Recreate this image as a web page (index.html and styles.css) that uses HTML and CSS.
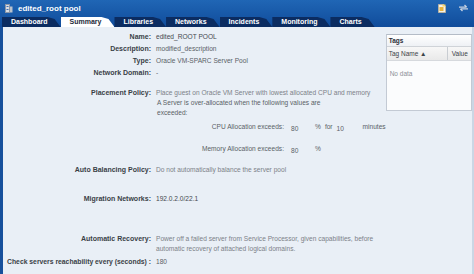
FILE: index.html
```html
<!DOCTYPE html>
<html lang="en">
<head>
  <meta charset="UTF-8" />
  <title>edited_root pool</title>
  <link rel="stylesheet" href="styles.css">
</head>
<body>
  <div class="app">
    <header class="top">
      <div class="title-row">
        <svg class="pool-icon" width="8" height="9" viewBox="0 0 8 9">
          <rect x="0.5" y="0.5" width="4" height="8" fill="#d9dde3" stroke="#8a96a6" stroke-width="1"/>
          <rect x="1.5" y="2" width="2" height="1" fill="#3c6fb6"/>
          <rect x="1.5" y="5" width="2" height="1" fill="#3c6fb6"/>
          <rect x="5" y="2.5" width="2.5" height="6" fill="#b9c2cd"/>
        </svg>
        <span class="title">edited_root pool</span>
        <div class="tools">
          <svg width="8" height="9" viewBox="0 0 8 9">
            <path d="M0.5 0.5h5l2 2v6h-7z" fill="#f4f1e6" stroke="#b8b3a2"/>
            <rect x="1.5" y="3" width="4" height="4" fill="#e8b33c"/>
            <rect x="4.5" y="0.5" width="3" height="2" fill="#f7d56b"/>
          </svg>
          <svg width="11" height="8" viewBox="0 0 11 8">
            <path d="M1 3.2h7.5M6.5 1l2.2 2.2M10 4.8H2.5M4.5 7L2.3 4.8" fill="none" stroke="#c8d3e2" stroke-width="1.3"/>
          </svg>
        </div>
      </div>
      <nav class="tabs">
        <span class="tab">Dashboard</span>
        <span class="tab active">Summary</span>
        <span class="tab">Libraries</span>
        <span class="tab">Networks</span>
        <span class="tab">Incidents</span>
        <span class="tab">Monitoring</span>
        <span class="tab">Charts</span>
      </nav>
    </header>

    <main class="content">
      <section class="form">
        <div class="row">
          <span class="label">Name:</span>
          <span class="value dark">edited_ROOT POOL</span>
        </div>
        <div class="row">
          <span class="label">Description:</span>
          <span class="value">modified_description</span>
        </div>
        <div class="row">
          <span class="label">Type:</span>
          <span class="value">Oracle VM-SPARC Server Pool</span>
        </div>
        <div class="row">
          <span class="label">Network Domain:</span>
          <span class="value">-</span>
        </div>
        <div class="row placement">
          <span class="label">Placement Policy:</span>
          <span class="value light">Place guest on Oracle VM Server with lowest allocated CPU and memory
            <span class="note">A Server is over-allocated when the following values are<br>exceeded:</span>
          </span>
        </div>
        <div class="row cpu">
          <span class="label"></span>
          <span class="sub">
            <span class="sub-label">CPU Allocation exceeds:</span>
            <span class="field">80</span>
            <span class="unit">%</span>
            <span class="unit for">for</span>
            <span class="field short">10</span>
            <span class="unit">minutes</span>
          </span>
        </div>
        <div class="row memory">
          <span class="label"></span>
          <span class="sub">
            <span class="sub-label">Memory Allocation exceeds:</span>
            <span class="field">80</span>
            <span class="unit">%</span>
          </span>
        </div>
        <div class="row balancing">
          <span class="label">Auto Balancing Policy:</span>
          <span class="value light">Do not automatically balance the server pool</span>
        </div>
        <div class="row migration">
          <span class="label">Migration Networks:</span>
          <span class="value dark">192.0.2.0/22.1</span>
        </div>
        <div class="row recovery">
          <span class="label">Automatic Recovery:</span>
          <span class="value light">Power off a failed server from Service Processor, given capabilities, before<br>automatic recovery of attached logical domains.</span>
        </div>
        <div class="row check">
          <span class="label long">Check servers reachability every (seconds) :</span>
          <span class="value">180</span>
        </div>
      </section>

      <aside class="tags">
        <div class="tags-title">Tags</div>
        <div class="tags-head">
          <span class="col-name">Tag Name &#9650;</span>
          <span class="col-value">Value</span>
        </div>
        <div class="tags-body">No data</div>
      </aside>
    </main>
  </div>
</body>
</html>
```

FILE: styles.css
```css
body {
  margin: 0;
  font-family: "Liberation Sans", Arial, sans-serif;
  background: #e9eff6;
}
.app {
  width: 474px;
  height: 274px;
  overflow: hidden;
}
.top {
  height: 27px;
  background: linear-gradient(#2066b5, #104c9b);
}
.title-row {
  height: 16px;
  display: flex;
  align-items: center;
  padding-left: 5px;
}
.title {
  margin-left: 5px;
  color: #fff;
  font-size: 8px;
  font-weight: bold;
}
.tools {
  margin-left: auto;
  margin-right: 5px;
  display: flex;
  align-items: center;
  gap: 12px;
}
.tabs {
  display: flex;
  height: 11px;
  padding-left: 2px;
  align-items: flex-end;
}
.tab {
  height: 10px;
  line-height: 10px;
  padding: 0 13px 0 9px;
  font-size: 7px;
  font-weight: bold;
  color: #fff;
  background: #0b2c61;
  clip-path: polygon(0 0, calc(100% - 13px) 0, calc(100% - 6px) 2px, 100% 100%, 0 100%);
}
.tab.active {
  background: #fff;
  color: #1d2a3a;
}
.content {
  height: 247px;
  display: flex;
  border-left: 3px solid #17509c;
  border-right: 2px solid #cbd6e4;
  background: #e9eff6;
}
.form {
  flex: 1;
  padding-top: 5px;
  font-size: 6.6px;
}
.row {
  display: grid;
  grid-template-columns: 148px 1fr;
  column-gap: 5px;
  line-height: 10px;
  margin-top: 2px;
}
.row:first-child {
  margin-top: 0;
}
.row.placement { margin-top: 10px; }
.row.cpu { margin-top: 4px; }
.row.memory { margin-top: 12px; }
.row.balancing { margin-top: 11px; }
.row.migration { margin-top: 19px; }
.row.recovery { margin-top: 30px; }
.row.check { margin-top: 3px; }
.label {
  display: flex;
  justify-content: flex-end;
  white-space: nowrap;
  font-size: 7px;
  font-weight: bold;
  color: #3a3f47;
}
.label.long {
  font-size: 6.8px;
}
.value {
  color: #5a5f66;
  white-space: nowrap;
}
.value.dark {
  color: #45494f;
}
.value.light {
  color: #7c8188;
}
.note {
  display: block;
  padding-left: 1px;
  color: #5a5f66;
}
.sub {
  display: flex;
  color: #5a5f66;
  white-space: nowrap;
}
.sub-label {
  width: 128px;
  text-align: right;
}
.field {
  width: 22px;
  padding-left: 7px;
  position: relative;
  top: 2px;
}
.field.short {
  width: 24px;
  padding-left: 0;
  margin-left: 4px;
}
.unit {
  margin-left: 2px;
}
.unit.for {
  margin-left: 4px;
}
.tags {
  width: 85px;
  height: 75px;
  margin-top: 7px;
  border: 1px solid #c3cad4;
  border-top-color: #b4bcc7;
  background: #fbfcfd;
  font-size: 6.5px;
  display: flex;
  flex-direction: column;
}
.tags-title {
  height: 11px;
  line-height: 11px;
  padding-left: 2px;
  font-weight: bold;
  color: #2c3038;
  background: linear-gradient(#ffffff, #eef1f5);
}
.tags-head {
  height: 13px;
  display: flex;
  align-items: center;
  background: linear-gradient(#f7f7f7, #e9e9e9);
  border-top: 1px solid #cfd3d8;
  border-bottom: 1px solid #d6d9dd;
  color: #3d4249;
}
.col-name {
  width: 58px;
  padding-left: 2px;
  border-right: 1px solid #c9cdd2;
  line-height: 13px;
}
.col-value {
  padding-left: 4px;
}
.tags-body {
  padding: 9px 0 0 3px;
  color: #8b9097;
}
```
